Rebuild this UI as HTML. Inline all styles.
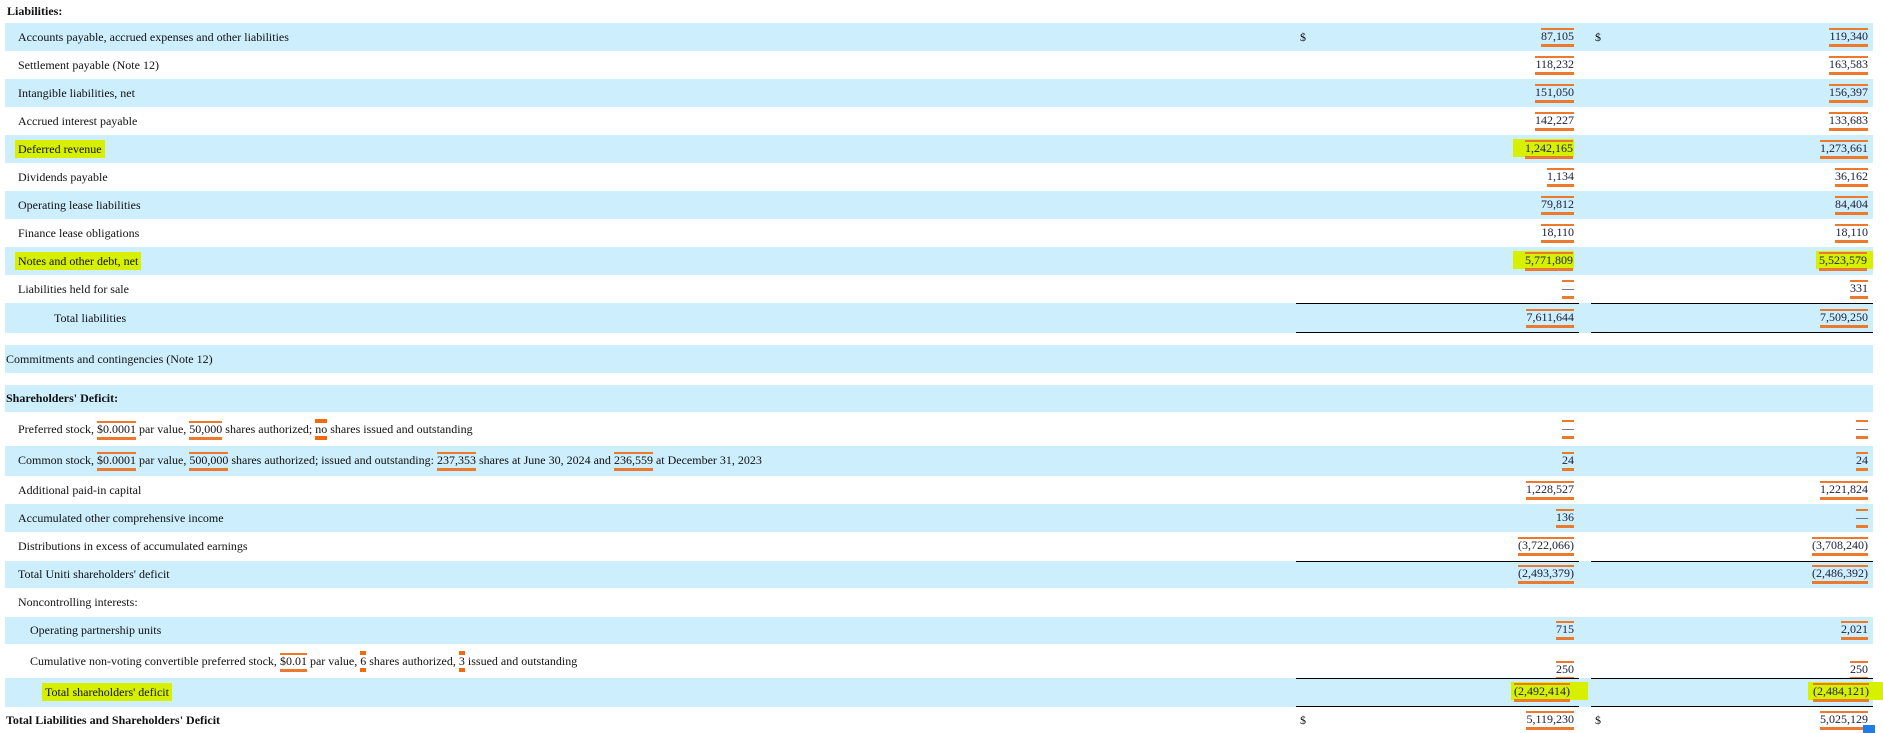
<!DOCTYPE html>
<html><head><meta charset="utf-8"><style>
*{margin:0;padding:0;box-sizing:border-box}
body{width:1883px;height:733px;position:relative;background:#fff;font-family:"Liberation Serif",serif;font-size:12px;color:#111;overflow:hidden}
.r{position:absolute;left:5px;width:1868px;display:flex;align-items:center}
.b{background:#cdeefc}
.l{position:absolute;white-space:nowrap}
.v{position:absolute;white-space:nowrap;text-align:right;color:#1a1f3a}
.v1{right:299px}
.v2{right:5px}
.d{position:absolute;}
.d1{left:1295px}
.d2{left:1590px}
.o{border-top:2px solid #ec7a2e;border-bottom:3px solid #ec7a2e;line-height:13px;display:inline-block;padding:0 0 1px}
.m{border-top:4px solid #f06a10;border-bottom:4px solid #f06a10;line-height:13px;display:inline-block}
.y{background:#d6f000;padding:2px 3px}
.bold{font-weight:bold}
.ln{position:absolute;height:1px;background:#000}
</style></head><body>
<div class="r" style="top:0;height:23px"><span class="l bold" style="left:2px">Liabilities:</span></div>

<div class="r b" style="top:23px;height:28px"><span class="l" style="left:13px">Accounts payable, accrued expenses and other liabilities</span><span class="d d1">$</span><span class="v v1"><span class="o">87,105</span></span><span class="d d2">$</span><span class="v v2"><span class="o">119,340</span></span></div>
<div class="r" style="top:51px;height:28px"><span class="l" style="left:13px">Settlement payable (Note 12)</span><span class="v v1"><span class="o">118,232</span></span><span class="v v2"><span class="o">163,583</span></span></div>
<div class="r b" style="top:79px;height:28px"><span class="l" style="left:13px">Intangible liabilities, net</span><span class="v v1"><span class="o">151,050</span></span><span class="v v2"><span class="o">156,397</span></span></div>
<div class="r" style="top:107px;height:28px"><span class="l" style="left:13px">Accrued interest payable</span><span class="v v1"><span class="o">142,227</span></span><span class="v v2"><span class="o">133,683</span></span></div>
<div class="r b" style="top:135px;height:28px"><span class="l" style="left:10px"><span class="y">Deferred revenue</span></span><span class="v v1"><span class="y" style="padding-left:12px;padding-right:1px"><span class="o">1,242,165</span></span></span><span class="v v2"><span class="o">1,273,661</span></span></div>
<div class="r" style="top:163px;height:28px"><span class="l" style="left:13px">Dividends payable</span><span class="v v1"><span class="o">1,134</span></span><span class="v v2"><span class="o">36,162</span></span></div>
<div class="r b" style="top:191px;height:28px"><span class="l" style="left:13px">Operating lease liabilities</span><span class="v v1"><span class="o">79,812</span></span><span class="v v2"><span class="o">84,404</span></span></div>
<div class="r" style="top:219px;height:28px"><span class="l" style="left:13px">Finance lease obligations</span><span class="v v1"><span class="o">18,110</span></span><span class="v v2"><span class="o">18,110</span></span></div>
<div class="r b" style="top:247px;height:28px"><span class="l" style="left:10px"><span class="y">Notes and other debt, net</span></span><span class="v v1"><span class="y" style="padding-left:12px;padding-right:1px"><span class="o">5,771,809</span></span></span><span class="v v2" style="right:0"><span class="y" style="padding-right:6px"><span class="o">5,523,579</span></span></span></div>
<div class="r" style="top:275px;height:28px"><span class="l" style="left:13px">Liabilities held for sale</span><span class="v v1"><span class="o">—</span></span><span class="v v2"><span class="o">331</span></span></div>
<div class="r b" style="top:303px;height:30px"><span class="l" style="left:49px">Total liabilities</span><span class="v v1"><span class="o">7,611,644</span></span><span class="v v2"><span class="o">7,509,250</span></span></div>
<div class="ln" style="top:303px;left:1296px;width:283px"></div><div class="ln" style="top:303px;left:1591px;width:282px"></div>
<div class="ln" style="top:332px;left:1296px;width:283px"></div><div class="ln" style="top:332px;left:1591px;width:282px"></div>

<div class="r b" style="top:345px;height:28px"><span class="l" style="left:1px">Commitments and contingencies (Note 12)</span></div>

<div class="r b" style="top:385px;height:27px"><span class="l bold" style="left:1px">Shareholders' Deficit:</span></div>
<div class="r" style="top:412px;height:34px"><span class="l" style="left:13px">Preferred stock, <span class="o">$0.0001</span> par value, <span class="o">50,000</span> shares authorized; <span class="m">no</span> shares issued and outstanding</span><span class="v v1"><span class="o">—</span></span><span class="v v2"><span class="o">—</span></span></div>
<div class="r b" style="top:446px;height:30px"><span class="l" style="left:13px">Common stock, <span class="o">$0.0001</span> par value, <span class="o">500,000</span> shares authorized; issued and outstanding: <span class="o">237,353</span> shares at June 30, 2024 and <span class="o">236,559</span> at December 31, 2023</span><span class="v v1"><span class="o">24</span></span><span class="v v2"><span class="o">24</span></span></div>
<div class="r" style="top:476px;height:28px"><span class="l" style="left:13px">Additional paid-in capital</span><span class="v v1"><span class="o">1,228,527</span></span><span class="v v2"><span class="o">1,221,824</span></span></div>
<div class="r b" style="top:504px;height:28px"><span class="l" style="left:13px">Accumulated other comprehensive income</span><span class="v v1"><span class="o">136</span></span><span class="v v2"><span class="o">—</span></span></div>
<div class="r" style="top:532px;height:29px"><span class="l" style="left:13px">Distributions in excess of accumulated earnings</span><span class="v v1"><span class="o">(3,722,066)</span></span><span class="v v2"><span class="o">(3,708,240)</span></span></div>
<div class="r b" style="top:561px;height:27px"><span class="l" style="left:13px">Total Uniti shareholders' deficit</span><span class="v v1"><span class="o">(2,493,379)</span></span><span class="v v2"><span class="o">(2,486,392)</span></span></div>
<div class="ln" style="top:561px;left:1296px;width:283px"></div><div class="ln" style="top:561px;left:1591px;width:282px"></div>
<div class="r" style="top:588px;height:29px"><span class="l" style="left:13px">Noncontrolling interests:</span></div>
<div class="r b" style="top:617px;height:27px"><span class="l" style="left:25px">Operating partnership units</span><span class="v v1"><span class="o">715</span></span><span class="v v2"><span class="o">2,021</span></span></div>
<div class="r" style="top:644px;height:34px"><span class="l" style="left:25px">Cumulative non-voting convertible preferred stock, <span class="o">$0.01</span> par value, <span class="m">6</span> shares authorized, <span class="m">3</span> issued and outstanding</span><span class="v v1" style="top:17px"><span class="o">250</span></span><span class="v v2" style="top:17px"><span class="o">250</span></span></div>
<div class="r b" style="top:678px;height:29px"><span class="l" style="left:37px"><span class="y">Total shareholders' deficit</span></span><span class="v v1" style="right:285px"><span class="y" style="padding-left:3px;padding-right:18px"><span class="o">(2,492,414)</span></span></span><span class="v v2" style="right:-10px"><span class="y" style="padding-left:5px;padding-right:14px"><span class="o">(2,484,121)</span></span></span></div>
<div class="ln" style="top:678px;left:1296px;width:283px"></div><div class="ln" style="top:678px;left:1591px;width:282px"></div>
<div class="ln" style="top:706px;left:1296px;width:283px"></div><div class="ln" style="top:706px;left:1591px;width:282px"></div>
<div class="r" style="top:707px;height:26px"><span class="l bold" style="left:1px">Total Liabilities and Shareholders' Deficit</span><span class="d d1">$</span><span class="v v1"><span class="o">5,119,230</span></span><span class="d d2">$</span><span class="v v2"><span class="o">5,025,129</span></span></div>
<div style="position:absolute;left:1863px;top:725px;width:12px;height:8px;background:#1e7be8"></div>
</body></html>
